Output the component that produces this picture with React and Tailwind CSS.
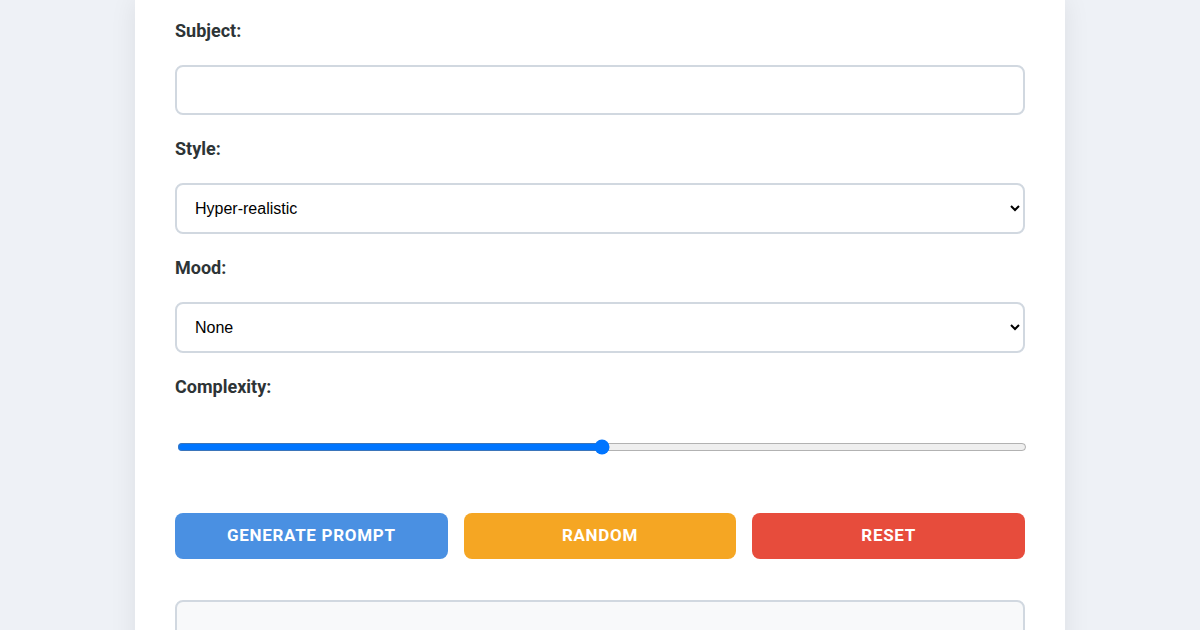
import React from "react";

export default function App() {
  const selFont = { fontFamily: "'Liberation Sans', Arial, sans-serif", appearance: "auto" };
  return (
    <div className="min-h-[630px] w-full bg-[#eef1f6] flex justify-center" style={{ fontFamily: "Roboto, 'Liberation Sans', sans-serif" }}>
      <div className="w-[930px] bg-white px-10 pb-10 shadow-[0_0_25px_rgba(0,0,0,0.08)]">
        <div className="pt-[17px]">
          <label className="block text-[18px] leading-[27px] font-bold text-[#2d3436]">Subject:</label>
          <input type="text" className="mt-[21px] block w-full h-[50px] rounded-lg border-2 border-[#d1d8e0] bg-white px-[14px] text-[16px] outline-none" style={{ fontFamily: "'Liberation Sans', Arial, sans-serif" }} />
        </div>
        <div className="mt-[20px]">
          <label className="block text-[18px] leading-[27px] font-bold text-[#2d3436]">Style:</label>
          <select defaultValue="Hyper-realistic" className="mt-[21px] block w-full h-[51px] rounded-lg border-2 border-[#d1d8e0] bg-white pl-[14px] pr-2 text-[16px] text-black outline-none" style={selFont}>
            <option>Hyper-realistic</option>
            <option>Cartoon</option>
          </select>
        </div>
        <div className="mt-[20px]">
          <label className="block text-[18px] leading-[27px] font-bold text-[#2d3436]">Mood:</label>
          <select defaultValue="None" className="mt-[21px] block w-full h-[51px] rounded-lg border-2 border-[#d1d8e0] bg-white pl-[14px] pr-2 text-[16px] text-black outline-none" style={selFont}>
            <option>None</option>
            <option>Happy</option>
          </select>
        </div>
        <div className="mt-[20px]">
          <label className="block text-[18px] leading-[27px] font-bold text-[#2d3436]">Complexity:</label>
          <input type="range" min="1" max="10" step="0.5" defaultValue="5.5" className="mt-[39px] ml-[2px] block w-full h-[16px] accent-[#0075ff]" />
        </div>
        <div className="mt-[58px] grid grid-cols-3 gap-4">
          <button className="h-[46px] rounded-lg bg-[#4a90e2] text-white font-bold text-[17px] uppercase tracking-[0.7px]">Generate Prompt</button>
          <button className="h-[46px] rounded-lg bg-[#f5a623] text-white font-bold text-[17px] uppercase tracking-[0.7px]">Random</button>
          <button className="h-[46px] rounded-lg bg-[#e74c3c] text-white font-bold text-[17px] uppercase tracking-[0.7px]">Reset</button>
        </div>
        <div className="mt-[41px] h-[120px] rounded-lg border-2 border-[#d1d8e0] bg-[#f8f9fa]"></div>
      </div>
    </div>
  );
}
